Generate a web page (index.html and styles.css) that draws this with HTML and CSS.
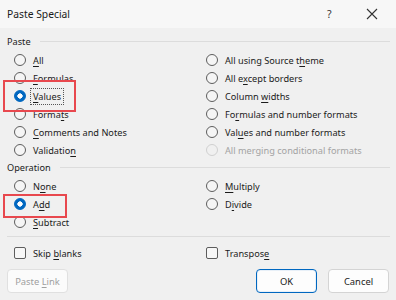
FILE: index.html
```html
<!DOCTYPE html>
<html>
<head>
<meta charset="utf-8">
<link rel="stylesheet" href="styles.css">
</head>
<body>
<div class="dialog">
  <div class="titlebar">
    <span class="title">Paste Special</span>
    <span class="help">?</span>
    <span class="close"><svg width="12" height="12" viewBox="0 0 12 12"><path d="M1 1L11 11M11 1L1 11" stroke="#333" stroke-width="1.1" fill="none"/></svg></span>
  </div>
  <div class="content">
    <div class="group-label"><span>Paste</span><div class="line"></div></div>
    <div class="grid">
      <div class="col">
        <div class="row"><span class="radio"></span><span><u>A</u>ll</span></div>
        <div class="row"><span class="radio"></span><span><u>F</u>ormulas</span></div>
        <div class="row"><span class="radio checked"></span><span class="focus"><u>V</u>alues</span></div>
        <div class="row"><span class="radio"></span><span>Forma<u>t</u>s</span></div>
        <div class="row"><span class="radio"></span><span><u>C</u>omments and Notes</span></div>
        <div class="row"><span class="radio"></span><span>Validatio<u>n</u></span></div>
      </div>
      <div class="col">
        <div class="row"><span class="radio"></span><span>All using Source t<u>h</u>eme</span></div>
        <div class="row"><span class="radio"></span><span>All e<u>x</u>cept borders</span></div>
        <div class="row"><span class="radio"></span><span>Column <u>w</u>idths</span></div>
        <div class="row"><span class="radio"></span><span>Fo<u>r</u>mulas and number formats</span></div>
        <div class="row"><span class="radio"></span><span>Val<u>u</u>es and number formats</span></div>
        <div class="row disabled"><span class="radio"></span><span>All merging conditional formats</span></div>
      </div>
    </div>
    <div class="group-label"><span>Operation</span><div class="line"></div></div>
    <div class="grid">
      <div class="col">
        <div class="row"><span class="radio"></span><span>N<u>o</u>ne</span></div>
        <div class="row"><span class="radio checked"></span><span>A<u>d</u>d</span></div>
        <div class="row"><span class="radio"></span><span><u>S</u>ubtract</span></div>
      </div>
      <div class="col">
        <div class="row"><span class="radio"></span><span><u>M</u>ultiply</span></div>
        <div class="row"><span class="radio"></span><span>D<u>i</u>vide</span></div>
      </div>
    </div>
    <div class="sep"></div>
    <div class="grid checks">
      <div class="col">
        <div class="row"><span class="check"></span><span>Skip <u>b</u>lanks</span></div>
      </div>
      <div class="col">
        <div class="row"><span class="check"></span><span>Transpos<u>e</u></span></div>
      </div>
    </div>
    <div class="buttons">
      <button class="btn disabled-btn">Paste <u>L</u>ink</button>
      <div class="spacer"></div>
      <button class="btn default">OK</button>
      <button class="btn">Cancel</button>
    </div>
  </div>
  <div class="mark mark-values"></div>
  <div class="mark mark-add"></div>
</div>
</body>
</html>
```
FILE: styles.css
```css
html, body {
  margin: 0;
  padding: 0;
}
body {
  width: 396px;
  height: 300px;
  overflow: hidden;
  background: #f0f0f0;
  font-family: "Noto Sans", "Open Sans", sans-serif;
  font-size: 9.2px;
  color: #1b1b1b;
}
.dialog {
  position: relative;
  width: 396px;
  height: 300px;
}
.titlebar {
  height: 28px;
  display: flex;
  align-items: center;
  background: #f7f7f7;
  padding-left: 7px;
}
.title {
  font-size: 10.3px;
  flex: 1;
  color: #1a1a1a;
}
.help {
  font-size: 10.5px;
  width: 12px;
  margin-right: 27px;
  color: #333;
}
.close {
  width: 12px;
  height: 12px;
  margin-right: 18px;
  display: flex;
}
.content {
  padding: 5px 6px 0 6px;
}
.group-label {
  height: 16px;
  display: flex;
  align-items: center;
  gap: 9px;
  padding-left: 1px;
}
.line {
  flex: 1;
  height: 1px;
  background: #dcdcdc;
}
.grid {
  display: grid;
  grid-template-columns: 192px 1fr;
  padding-left: 8px;
  padding-top: 2px;
}
.row {
  height: 18px;
  display: flex;
  align-items: center;
  gap: 7px;
  white-space: nowrap;
}
.radio {
  width: 10px;
  height: 10px;
  border: 1px solid #5d5d5d;
  border-radius: 50%;
  background: #f5f5f5;
  flex: none;
  box-sizing: content-box;
}
.radio.checked {
  border: 1px solid #0067c0;
  background: radial-gradient(circle, #ffffff 0, #ffffff 2.4px, #0067c0 2.9px);
}
.disabled {
  color: #a3a3a3;
}
.disabled .radio {
  border-color: #d0d0d0;
  background: #f0f0f0;
}
.focus {
  outline: 1px dotted #555;
  outline-offset: 1px;
  padding: 0 1px;
  margin-left: -1px;
}
u {
  text-decoration-thickness: 1px;
  text-underline-offset: 2px;
}
.sep {
  height: 1px;
  background: #dcdcdc;
  margin-top: 5px;
  margin-left: 1px;
}
.checks {
  padding-top: 7px;
}
.check {
  width: 10px;
  height: 10px;
  border: 1px solid #5d5d5d;
  border-radius: 2px;
  background: #f7f7f7;
  flex: none;
}
.buttons {
  display: flex;
  gap: 11px;
  margin-top: 7px;
  padding-left: 1px;
  padding-right: 1px;
}
.spacer {
  flex: 1;
}
.btn {
  width: 61px;
  height: 24px;
  border: 1px solid #d4d4d4;
  border-radius: 4px;
  background: #fdfdfd;
  font-family: inherit;
  font-size: 9.4px;
  color: #1b1b1b;
  padding: 0;
}
.btn.default {
  border: 1px solid #0067c0;
  box-shadow: inset 0 0 0 1px #e8f0f8;
}
.disabled-btn {
  color: #a0a0a0;
  background: #fbfbfb;
  border-color: #e0e0e0;
}
.mark {
  position: absolute;
  border: 2px solid #e8484e;
  box-sizing: border-box;
}
.mark-values {
  left: 3px;
  top: 80px;
  width: 73px;
  height: 32px;
}
.mark-add {
  left: 3px;
  top: 194px;
  width: 64px;
  height: 24px;
}
```
